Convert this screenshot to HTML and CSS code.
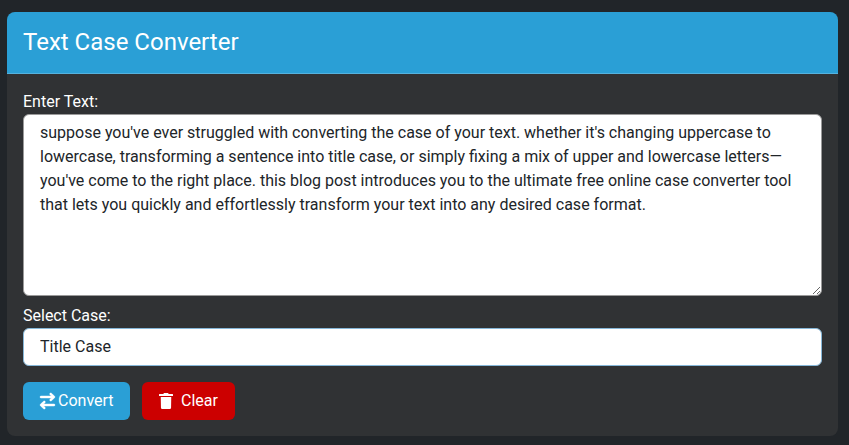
FILE: index.html
```
<!DOCTYPE html>
<html lang="en">
<head>
<meta charset="utf-8">
<title>Text Case Converter</title>
<link rel="stylesheet" href="styles.css">
</head>
<body>
<main class="card">
  <header class="card-header"><h1>Text Case Converter</h1></header>
  <form class="card-body">
    <label class="field-label" for="text">Enter Text:</label>
    <textarea id="text" class="text-input">suppose you've ever struggled with converting the case of your text. whether it's changing uppercase to lowercase, transforming a sentence into title case, or simply fixing a mix of upper and lowercase letters—you've come to the right place. this blog post introduces you to the ultimate free online case converter tool that lets you quickly and effortlessly transform your text into any desired case format.</textarea>
    <label class="field-label" for="case">Select Case:</label>
    <select id="case" class="case-select">
      <option>Title Case</option>
    </select>
    <div class="actions">
      <button type="button" class="btn btn-convert">
        <svg class="icon icon-exchange" viewBox="0 0 448 512" preserveAspectRatio="none" aria-hidden="true"><path d="M438.6 150.6c12.5-12.5 12.5-32.8 0-45.3l-96-96c-12.5-12.5-32.8-12.5-45.3 0s-12.5 32.8 0 45.3L338.7 96 32 96C14.3 96 0 110.3 0 128s14.3 32 32 32l306.7 0-41.4 41.4c-12.5 12.5-12.5 32.8 0 45.3s32.8 12.5 45.3 0l96-96zm-333.3 352c12.5 12.5 32.8 12.5 45.3 0s12.5-32.8 0-45.3L109.3 416 416 416c17.7 0 32-14.3 32-32s-14.3-32-32-32l-306.7 0 41.4-41.4c12.5-12.5 12.5-32.8 0-45.3s-32.8-12.5-45.3 0l-96 96c-12.5 12.5-12.5 32.8 0 45.3l96 96z"/></svg>Convert
      </button>
      <button type="button" class="btn btn-clear">
        <svg class="icon icon-trash" viewBox="0 0 448 512" aria-hidden="true"><path d="M432 32H312l-9.4-18.7A24 24 0 0 0 281.1 0H166.8a23.72 23.72 0 0 0-21.4 13.3L136 32H16A16 16 0 0 0 0 48v32a16 16 0 0 0 16 16h416a16 16 0 0 0 16-16V48a16 16 0 0 0-16-16zM56 128h336l-6 340a44 44 0 0 1-44 44H106a44 44 0 0 1-44-44z"/></svg>Clear
      </button>
    </div>
  </form>
</main>
</body>
</html>
```
FILE: styles.css
```
* {
  box-sizing: border-box;
}

html, body {
  height: 100%;
}

body {
  margin: 0;
  padding: 12px 11px 9px 7px;
  background: #212529;
  color: #fff;
  font-family: Roboto, "Liberation Sans", sans-serif;
  font-size: 16px;
  line-height: 1.5;
  overflow: hidden;
}

.card {
  background: #303234;
  border-radius: 8px;
  overflow: hidden;
}

.card-header {
  padding: 12px 16px;
  height: 62px;
  background: #2a9fd6;
  border-bottom: 1px solid #55b2de;
}

.card-header h1 {
  margin: 0;
  font-size: 24px;
  font-weight: 400;
  line-height: 36px;
}

.card-body {
  display: flex;
  flex-direction: column;
  align-items: stretch;
  padding: 16px;
}

.field-label {
  display: block;
  line-height: 24px;
}

.text-input {
  display: block;
  width: 100%;
  height: 182px;
  margin: 0 0 8px;
  padding: 6px 16px;
  border: 1px solid #9a9a9a;
  border-radius: 6px;
  background: #fff;
  color: #212529;
  font: inherit;
  line-height: 24px;
  resize: vertical;
  outline: none;
}

.case-select {
  display: block;
  width: 100%;
  height: 38px;
  margin: 0 0 16px;
  padding: 6px 16px;
  border: 1px solid #86b7d8;
  border-radius: 6px;
  background: #fff;
  color: #212529;
  font: inherit;
  line-height: 24px;
  appearance: none;
  -webkit-appearance: none;
  outline: none;
}

.actions {
  display: flex;
  gap: 12px;
}

.btn {
  display: inline-flex;
  align-items: center;
  height: 38px;
  padding: 0 16px;
  border: 0;
  border-radius: 6px;
  color: #fff;
  font: inherit;
  line-height: 24px;
}

.btn-convert {
  width: 107px;
  background: #2a9fd6;
}

.btn-clear {
  width: 93px;
  padding-left: 17px;
  background: #c00;
}

.icon {
  display: block;
  height: 16px;
  fill: currentColor;
  flex: none;
  overflow: visible;
}

.icon-exchange {
  width: 15px;
  margin: 0 3.5px 0 0.5px;
  stroke: currentColor;
  stroke-width: 14;
}

.icon-trash {
  width: 14px;
  margin-right: 8px;
}
```
